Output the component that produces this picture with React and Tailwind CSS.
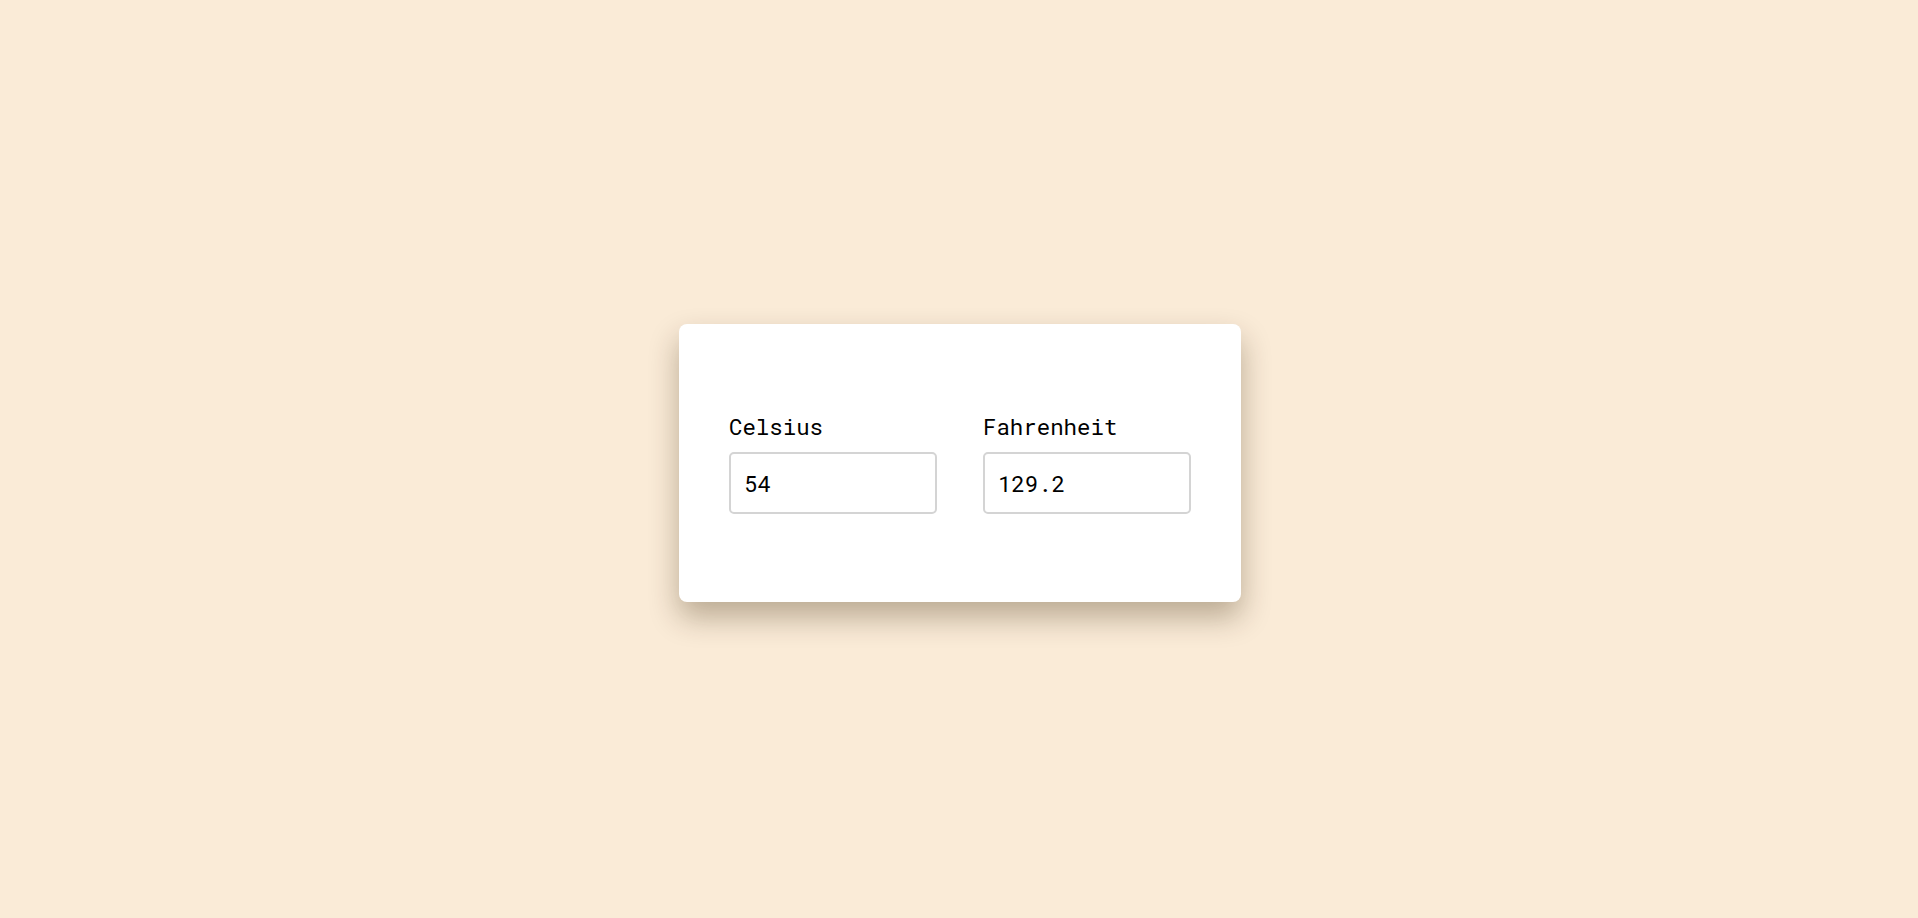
import React, { useState } from "react";

const TemperatureConverter = () => {
  const [celsius, setCelsius] = useState("54");
  const [fahrenheit, setFahrenheit] = useState("129.2");

  const onCelsius = (e) => {
    const v = e.target.value;
    setCelsius(v);
    const n = parseFloat(v);
    setFahrenheit(isNaN(n) ? "" : String(Math.round((n * 9 / 5 + 32) * 10) / 10));
  };

  const onFahrenheit = (e) => {
    const v = e.target.value;
    setFahrenheit(v);
    const n = parseFloat(v);
    setCelsius(isNaN(n) ? "" : String(Math.round(((n - 32) * 5 / 9) * 10) / 10));
  };

  return (
    <div className="min-h-screen bg-[#faebd7] flex items-center justify-center pt-[8px] pl-[2px] font-['Roboto_Mono','DejaVu_Sans_Mono','Liberation_Mono',monospace] text-black">
      <div className="w-[562px] h-[278px] bg-white rounded-lg shadow-[0_15px_30px_rgba(50,30,0,0.32)] px-[50px] py-[88px] flex gap-[46px]">
        <label className="flex flex-col gap-[10px] w-[208px]">
          <span className="text-[22.4px] leading-[30px]">Celsius</span>
          <input
            type="text"
            value={celsius}
            onChange={onCelsius}
            className="w-full h-[62px] border-2 border-[#d4d4d4] rounded-[5px] px-[13px] text-[22.4px] outline-none"
          />
        </label>
        <label className="flex flex-col gap-[10px] w-[208px]">
          <span className="text-[22.4px] leading-[30px]">Fahrenheit</span>
          <input
            type="text"
            value={fahrenheit}
            onChange={onFahrenheit}
            className="w-full h-[62px] border-2 border-[#d4d4d4] rounded-[5px] px-[13px] text-[22.4px] outline-none"
          />
        </label>
      </div>
    </div>
  );
};

export default function App() {
  return <TemperatureConverter />;
}
